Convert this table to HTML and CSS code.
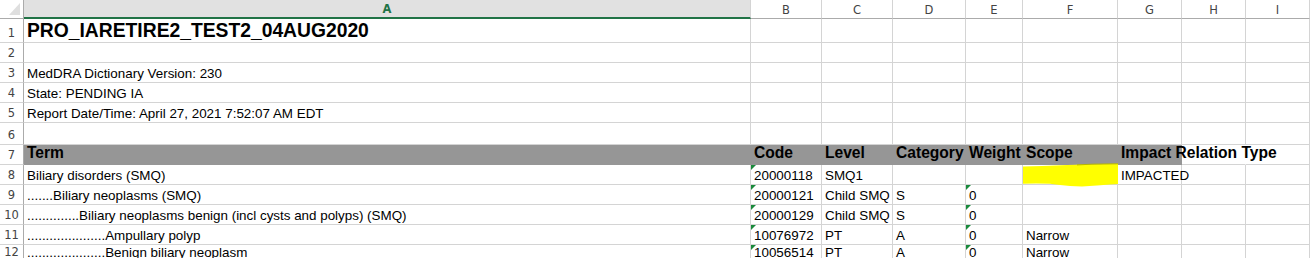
FILE: index.html
```html
<!DOCTYPE html>
<html>
<head>
<meta charset="utf-8">
<link rel="stylesheet" href="styles.css">
</head>
<body>
<div class="sheet">
  <div class="corner"></div>
  <div class="ch ch-sel">A</div>
  <div class="ch">B</div>
  <div class="ch">C</div>
  <div class="ch">D</div>
  <div class="ch">E</div>
  <div class="ch">F</div>
  <div class="ch">G</div>
  <div class="ch">H</div>
  <div class="ch">I</div>

  <div class="rh">1</div>
  <div class="c title">PRO_IARETIRE2_TEST2_04AUG2020</div>
  <div class="c"></div><div class="c"></div><div class="c"></div><div class="c"></div><div class="c"></div><div class="c"></div><div class="c"></div><div class="c"></div>

  <div class="rh">2</div>
  <div class="c"></div><div class="c"></div><div class="c"></div><div class="c"></div><div class="c"></div><div class="c"></div><div class="c"></div><div class="c"></div><div class="c"></div>

  <div class="rh">3</div>
  <div class="c">MedDRA Dictionary Version: 230</div>
  <div class="c"></div><div class="c"></div><div class="c"></div><div class="c"></div><div class="c"></div><div class="c"></div><div class="c"></div><div class="c"></div>

  <div class="rh">4</div>
  <div class="c">State: PENDING IA</div>
  <div class="c"></div><div class="c"></div><div class="c"></div><div class="c"></div><div class="c"></div><div class="c"></div><div class="c"></div><div class="c"></div>

  <div class="rh">5</div>
  <div class="c">Report Date/Time: April 27, 2021 7:52:07 AM EDT</div>
  <div class="c"></div><div class="c"></div><div class="c"></div><div class="c"></div><div class="c"></div><div class="c"></div><div class="c"></div><div class="c"></div>

  <div class="rh">6</div>
  <div class="c"></div><div class="c"></div><div class="c"></div><div class="c"></div><div class="c"></div><div class="c"></div><div class="c"></div><div class="c"></div><div class="c"></div>

  <div class="rh">7</div>
  <div class="c hd">Term</div>
  <div class="c hd">Code</div>
  <div class="c hd">Level</div>
  <div class="c hd">Category</div>
  <div class="c hd">Weight</div>
  <div class="c hd">Scope</div>
  <div class="c hd">Impact Relation Type</div>
  <div class="c spill"></div>
  <div class="c"></div>

  <div class="rh">8</div>
  <div class="c">Biliary disorders (SMQ)</div>
  <div class="c tri">20000118</div>
  <div class="c">SMQ1</div>
  <div class="c"></div>
  <div class="c"></div>
  <div class="c mark"><svg class="hl" width="98" height="26" viewBox="0 0 98 26"><path d="M1 3.5 L20 3 L45 2 L70 1.2 L96 0.8 L96 21 L88 21.5 L75 22.6 L60 23.4 L48 23 L38 22 L28 20.8 L14 20.6 L1 20.8 Z" fill="#ffff00"/><path d="M55 1.9 L70 1.2 L96 0.8" stroke="#b5b500" stroke-width="1" fill="none"/></svg></div>
  <div class="c">IMPACTED</div>
  <div class="c"></div>
  <div class="c"></div>

  <div class="rh">9</div>
  <div class="c">.......Biliary neoplasms (SMQ)</div>
  <div class="c tri">20000121</div>
  <div class="c">Child SMQ</div>
  <div class="c">S</div>
  <div class="c tri">0</div>
  <div class="c"></div><div class="c"></div><div class="c"></div><div class="c"></div>

  <div class="rh">10</div>
  <div class="c">..............Biliary neoplasms benign (incl cysts and polyps) (SMQ)</div>
  <div class="c tri">20000129</div>
  <div class="c">Child SMQ</div>
  <div class="c">S</div>
  <div class="c tri">0</div>
  <div class="c"></div><div class="c"></div><div class="c"></div><div class="c"></div>

  <div class="rh">11</div>
  <div class="c">.....................Ampullary polyp</div>
  <div class="c tri">10076972</div>
  <div class="c">PT</div>
  <div class="c">A</div>
  <div class="c tri">0</div>
  <div class="c">Narrow</div>
  <div class="c"></div><div class="c"></div><div class="c"></div>

  <div class="rh">12</div>
  <div class="c">.....................Benign biliary neoplasm</div>
  <div class="c tri">10056514</div>
  <div class="c">PT</div>
  <div class="c">A</div>
  <div class="c tri">0</div>
  <div class="c">Narrow</div>
  <div class="c"></div><div class="c"></div><div class="c"></div>
</div>
</body>
</html>
```

FILE: styles.css
```css
html, body {
  margin: 0;
  padding: 0;
  background: #ffffff;
  overflow: hidden;
}

.sheet {
  display: grid;
  grid-template-columns: 24px 727px 71px 71px 73px 57px 95px 64px 64px 64px;
  grid-template-rows: 19px 24px 20px 20px 20px 20px 22px 20px 20px 20px 20px 20px;
  width: 1310px;
  font-family: "Liberation Sans", Arial, sans-serif;
}

.corner {
  position: relative;
  border-right: 1px solid #ababab;
  border-bottom: 1px solid #ababab;
  background: #ffffff;
}

.corner::after {
  content: "";
  position: absolute;
  right: 3px;
  bottom: 3px;
  width: 11px;
  height: 12px;
  background: #dfdfdf;
  clip-path: polygon(100% 0, 100% 100%, 0 100%);
}

.ch {
  display: flex;
  align-items: center;
  justify-content: center;
  border-right: 1px solid #d4d4d4;
  border-bottom: 1px solid #ababab;
  font-family: "DejaVu Sans", sans-serif;
  font-size: 11.5px;
  color: #444444;
  padding-top: 1px;
}

.ch-sel {
  background: #e1e1e1;
  color: #217346;
  font-weight: bold;
  border-bottom: 2px solid #217346;
  border-right-color: #d4d4d4;
}

.rh {
  display: flex;
  align-items: flex-end;
  justify-content: center;
  border-right: 1px solid #ababab;
  border-bottom: 1px solid #d4d4d4;
  font-family: "DejaVu Sans", sans-serif;
  font-size: 11.5px;
  color: #444444;
  padding-bottom: 2px;
}

.c {
  display: flex;
  align-items: flex-end;
  border-right: 1px solid #d4d4d4;
  border-bottom: 1px solid #d4d4d4;
  padding: 0 2px 1px 3px;
  white-space: nowrap;
  font-size: 13.4px;
  line-height: 15px;
  color: #000000;
  min-width: 0;
}

.title {
  font-weight: bold;
  font-size: 19.3px;
  line-height: 22px;
  padding-bottom: 0;
  padding-left: 3px;
}

.hd {
  background: #969696;
  border-right-color: #969696;
  border-bottom-color: #969696;
  font-weight: bold;
  font-size: 15.6px;
  line-height: 18px;
  padding-bottom: 2px;
}

.spill {
  border-right-color: transparent;
}

.tri {
  position: relative;
}

.tri::before {
  content: "";
  position: absolute;
  left: 0;
  top: 0;
  border-top: 5px solid #1a8a3c;
  border-right: 5px solid transparent;
}

.mark {
  position: relative;
}

.hl {
  position: absolute;
  left: -1px;
  top: -2px;
}
```
